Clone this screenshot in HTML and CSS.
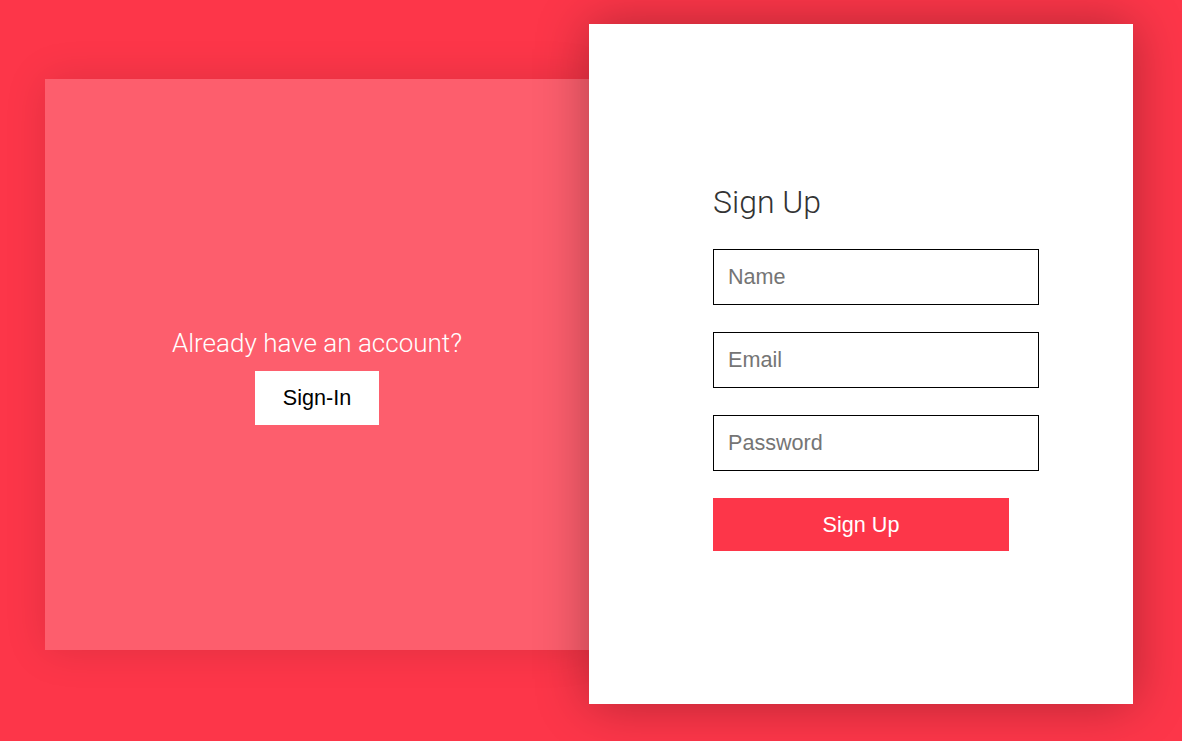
FILE: index.html
```html
<!DOCTYPE html>
<html lang="en">
<head>
  <meta charset="UTF-8" />
  <meta name="viewport" content="width=device-width, initial-scale=1" />
  <title>Sign Up</title>
  <link rel="stylesheet" href="styles.css">
</head>
<body>

<div class="wrapper">
  <div class="side">
    <p class="side-text">Already have an account?</p>
    <button class="button signin">Sign-In</button>
  </div>

  <div class="card">
    <form class="form">
      <h1>Sign Up</h1>
      <input type="text" class="field" placeholder="Name">
      <input type="email" class="field" placeholder="Email">
      <input type="password" class="field" placeholder="Password">
      <button type="button" class="button signup">Sign Up</button>
    </form>
  </div>
</div>

</body>
</html>
```

FILE: styles.css
```css
body {
  margin: 0;
  padding: 0;
  min-height: 100vh;
  background-color: #fd3649;
  font-family: "Liberation Sans", Arial, sans-serif;
  overflow: hidden;
}

.wrapper {
  display: flex;
  align-items: flex-start;
  padding: 24px 49px 0 45px;
}

.side {
  width: 544px;
  height: 571px;
  margin-top: 55px;
  background-color: rgba(255, 255, 255, 0.2);
  box-shadow: 0 0 40px rgba(0, 0, 0, 0.12);
  display: flex;
  flex-direction: column;
  align-items: center;
  padding-top: 249px;
  box-sizing: border-box;
}

.side-text {
  font-family: Roboto, sans-serif;
  font-weight: 300;
  font-size: 26px;
  line-height: 30px;
  color: #fff;
  margin: 0 0 13px;
}

.button {
  border: none;
  font-family: "Liberation Sans", Arial, sans-serif;
  font-size: 21.6px;
  cursor: pointer;
  padding: 0;
}

.signin {
  width: 124px;
  height: 54px;
  background-color: #fff;
  color: #000;
}

.card {
  width: 544px;
  height: 680px;
  background-color: #fff;
  box-shadow: 0 0 50px rgba(0, 0, 0, 0.3);
  position: relative;
  z-index: 1;
  box-sizing: border-box;
  padding: 159px 0 0 124px;
}

.form {
  display: flex;
  flex-direction: column;
  align-items: flex-start;
}

h1 {
  font-family: Roboto, sans-serif;
  font-weight: 300;
  font-size: 32px;
  line-height: 38px;
  color: #333;
  margin: 0 0 28px;
}

.field {
  width: 326px;
  height: 56px;
  box-sizing: border-box;
  border: 1px solid #000;
  border-radius: 0;
  padding: 0 14px;
  margin: 0 0 27px;
  font-family: "Liberation Sans", Arial, sans-serif;
  font-size: 21.6px;
  color: #333;
  outline: none;
}

.field::placeholder {
  color: #757575;
}

.signup {
  width: 296px;
  height: 53px;
  background-color: #fd3649;
  color: #fff;
}
```
